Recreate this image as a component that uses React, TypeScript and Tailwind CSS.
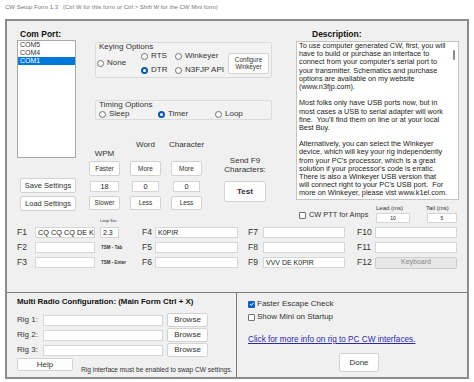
import React from "react";

const desc = [
  "To use computer generated CW, first, you will",
  "have to build or purchase an interface to",
  "connect from your computer's serial port to",
  "your transmitter. Schematics and purchase",
  "options are available on my website",
  "(www.n3fjp.com).",
  "",
  "Most folks only have USB ports now, but in",
  "most cases a USB to serial adapter will work",
  "fine.  You'll find them on line or at your local",
  "Best Buy.",
  "",
  "Alternatively, you can select the Winkeyer",
  "device, which will key your rig independently",
  "from your PC's processor, which is a great",
  "solution if your processor's code is erratic.",
  "There is also a Winkeyer USB version that",
  "will connect right to your PC's USB port.  For",
  "more on Winkeyer, please vist www.k1el.com.",
];

const Btn: React.FC<{ className?: string; children?: React.ReactNode }> = ({ className, children }) => (
  <div
    className={`flex shrink-0 items-center justify-center rounded-[2px] border border-[#d2d2d2] bg-[#fdfdfd] text-[#333] ${className ?? ""}`}
  >
    {children}
  </div>
);

// input box; text size passed in so classes don't clash
const Field: React.FC<{ className?: string; size?: string; children?: React.ReactNode }> = ({
  className,
  size = "text-[7.3px] leading-[9px]",
  children,
}) => (
  <div
    className={`shrink-0 whitespace-pre border border-[#d6d6d6] bg-white text-[#222] ${size} ${className ?? ""}`}
  >
    {children}
  </div>
);

const Radio: React.FC<{ checked?: boolean }> = ({ checked }) =>
  checked ? (
    <span className="flex h-[7px] w-[7px] shrink-0 items-center justify-center rounded-full bg-[#0b57a8]">
      <span className="h-[3px] w-[3px] rounded-full bg-white" />
    </span>
  ) : (
    <span className="h-[7px] w-[7px] shrink-0 rounded-full border border-[#707070] bg-white" />
  );

const RadioItem: React.FC<{ label: string; checked?: boolean; className?: string }> = ({
  label,
  checked,
  className,
}) => (
  <div className={`flex h-[8px] items-center gap-[3px] text-[8px] leading-[8px] text-[#333] ${className ?? ""}`}>
    <Radio checked={checked} />
    <span className="whitespace-nowrap">{label}</span>
  </div>
);

const Check: React.FC<{ checked?: boolean }> = ({ checked }) =>
  checked ? (
    <span className="flex h-[7px] w-[7px] shrink-0 items-center justify-center rounded-[1px] bg-[#0b62c4]">
      <svg viewBox="0 0 8 8" className="h-[6px] w-[6px]">
        <path d="M1.5 4.2 3.2 5.8 6.5 2.2" fill="none" stroke="white" strokeWidth="1.3" />
      </svg>
    </span>
  ) : (
    <span className="h-[7px] w-[7px] shrink-0 rounded-[1px] border border-[#707070] bg-white" />
  );

const FLabel: React.FC<{ w: string; children: React.ReactNode }> = ({ w, children }) => (
  <div className={`${w} shrink-0 text-[8.5px] leading-[11px] text-[#333]`}>{children}</div>
);

export default function App() {
  return (
    <div className="h-[382px] w-[474px] overflow-hidden bg-white font-['Liberation_Sans',Arial,sans-serif] text-[#333]">
      <div className="h-[19px] whitespace-pre pl-[5px] pt-[4px] text-[6px] leading-[6px] text-[#777]">
        {"CW Setup Form 1.3   (Ctrl W for this form or Ctrl > Shift W for the CW Mini form)"}
      </div>

      <div className="ml-[5px] flex h-[360px] w-[464px] flex-col border-2 border-[#8c8c8c] bg-[#f0f0f0]">
        {/* Upper section */}
        <div className="h-[272px] shrink-0 border-b border-[#7a7a7a]">
          <div className="flex h-[206px] pl-[10px]">
            {/* Com port column */}
            <div className="flex w-[59px] flex-col pt-[7px]">
              <div className="h-[12px] pl-[3px] text-[8.5px] font-bold leading-[12px] text-[#111]">Com Port:</div>
              <div className="h-[118px] border border-[#a9a9a9] bg-white">
                <div className="h-[8px] pl-[2px] text-[7px] leading-[8px]">COM5</div>
                <div className="h-[8px] pl-[2px] text-[7px] leading-[8px]">COM4</div>
                <div className="h-[8px] bg-[#0078d7] pl-[2px] text-[7px] leading-[8px] text-white">COM1</div>
              </div>
              <Btn className="ml-[3px] mt-[20px] h-[15px] w-[56px] text-[7.5px]">Save Settings</Btn>
              <Btn className="ml-[3px] mt-[3px] h-[15px] w-[56px] text-[7.5px]">Load Settings</Btn>
            </div>

            {/* Options column */}
            <div className="ml-[13px] flex w-[184px] flex-col">
              <div className="ml-[6px] mt-[21px] h-[36px] w-[177px] rounded-[2px] border border-[#dadada] bg-[#f2f2f2]">
                <div className="pl-[3px] text-[8px] leading-[7px]">Keying Options</div>
                <div className="mt-[2px] flex items-center pl-[1px]">
                  <RadioItem label="None" className="w-[44px]" />
                  <div className="flex w-[34px] flex-col gap-[6px]">
                    <RadioItem label="RTS" />
                    <RadioItem label="DTR" checked />
                  </div>
                  <div className="flex w-[53px] flex-col gap-[6px]">
                    <RadioItem label="Winkeyer" />
                    <RadioItem label="N3FJP API" />
                  </div>
                  <Btn className="h-[21px] w-[41px] flex-col text-[6.3px] leading-[7px]">
                    <span>Configure</span>
                    <span>Winkeyer</span>
                  </Btn>
                </div>
              </div>

              <div className="ml-[6px] mt-[22px] h-[20px] w-[177px] rounded-[2px] border border-[#dadada] bg-[#f2f2f2]">
                <div className="pl-[3px] text-[8px] leading-[7px]">Timing Options</div>
                <div className="mt-[2px] flex items-center pl-[3px]">
                  <RadioItem label="Sleep" className="w-[59px]" />
                  <RadioItem label="Timer" checked className="w-[57px]" />
                  <RadioItem label="Loop" />
                </div>
              </div>

              <div className="mt-[20px] flex">
                <div className="flex w-[31px] flex-col items-center">
                  <div className="mt-[9px] h-[10px] text-[8px] leading-[10px]">WPM</div>
                  <Btn className="mt-[2px] h-[15px] w-[31px] text-[6.5px]">Faster</Btn>
                  <Field className="mt-[5px] h-[11px] w-[29px] text-center">18</Field>
                  <Btn className="mt-[4px] h-[14px] w-[31px] text-[6.5px]">Slower</Btn>
                </div>
                <div className="ml-[10px] flex w-[31px] flex-col items-center">
                  <div className="h-[10px] text-[8px] leading-[10px]">Word</div>
                  <Btn className="mt-[11px] h-[15px] w-[31px] text-[6.5px]">More</Btn>
                  <Field className="mt-[5px] h-[11px] w-[27px] text-center">0</Field>
                  <Btn className="mt-[4px] h-[14px] w-[31px] text-[6.5px]">Less</Btn>
                </div>
                <div className="ml-[10px] flex w-[31px] flex-col items-center">
                  <div className="h-[10px] whitespace-nowrap text-[8px] leading-[10px]">Character</div>
                  <Btn className="mt-[11px] h-[15px] w-[31px] text-[6.5px]">More</Btn>
                  <Field className="mt-[5px] h-[11px] w-[27px] text-center">0</Field>
                  <Btn className="mt-[4px] h-[14px] w-[31px] text-[6.5px]">Less</Btn>
                </div>
                <div className="ml-[22px] flex w-[42px] flex-col items-center">
                  <div className="mt-[16px] whitespace-nowrap text-center text-[8px] leading-[9px]">
                    Send F9
                    <br />
                    Characters:
                  </div>
                  <Btn className="mt-[7px] h-[21px] w-[42px] text-[8px] font-bold text-[#111]">Test</Btn>
                </div>
              </div>

              <div className="ml-[11px] mt-[8px] whitespace-nowrap text-[4px] leading-[6px]">Loop Sec</div>
            </div>

            {/* Description column */}
            <div className="ml-[23px] flex w-[163px] flex-col pt-[7px]">
              <div className="h-[12px] pl-[16px] text-[8.5px] font-bold leading-[12px] text-[#111]">Description:</div>
              <div className="mt-[1px] flex h-[159px] border border-[#c4c4c4] bg-white">
                <div className="flex-1 pl-[2px] text-[7.3px] leading-[8.2px] text-[#222]">
                  {desc.map((l, i) => (
                    <div key={i} className="h-[8.2px] whitespace-pre">
                      {l || "\u00a0"}
                    </div>
                  ))}
                </div>
                <div className="flex w-[8px] justify-center">
                  <div className="mt-[8px] h-[10px] w-[2px] rounded-full bg-[#8a8a8a]" />
                </div>
              </div>
              <div className="mt-[5px] flex h-[18px]">
                <div className="mb-[3px] flex w-[80px] items-center gap-[3px] self-end pl-[3px] text-[7.4px] leading-[10px]">
                  <Check />
                  <span className="whitespace-nowrap">CW PTT for Amps</span>
                </div>
                <div className="flex w-[34px] flex-col">
                  <div className="h-[7px] whitespace-nowrap text-[6px] leading-[7px]">Lead (ms)</div>
                  <Field className="mt-px h-[10px] w-[34px] text-center" size="text-[5px] leading-[8px]">
                    10
                  </Field>
                </div>
                <div className="ml-[16px] flex w-[31px] flex-col">
                  <div className="h-[7px] whitespace-nowrap text-[6px] leading-[7px]">Tail (ms)</div>
                  <Field className="ml-px mt-px h-[10px] w-[30px] text-center" size="text-[5px] leading-[8px]">
                    5
                  </Field>
                </div>
              </div>
            </div>
          </div>

          {/* Function key rows */}
          <div className="flex flex-col gap-[4px] pl-[10px]">
            <div className="flex h-[11px] items-center">
              <FLabel w="w-[18px]">F1</FLabel>
              <Field className="h-[11px] w-[60px] pl-[2px]">CQ CQ CQ DE K</Field>
              <div className="w-[47px] pl-[5px]">
                <Field className="h-[11px] w-[19px] pl-[2px]" size="text-[7px] leading-[9px]">
                  2.3
                </Field>
              </div>
              <FLabel w="w-[13px]">F4</FLabel>
              <Field className="h-[11px] w-[83px] pl-[2px]" size="text-[7px] leading-[9px]">
                K0PIR
              </Field>
              <div className="w-[10px]" />
              <FLabel w="w-[15px]">F7</FLabel>
              <Field className="h-[11px] w-[82px]" />
              <div className="w-[12px]" />
              <FLabel w="w-[18px]">F10</FLabel>
              <Field className="h-[11px] w-[82px]" />
            </div>
            <div className="flex h-[11px] items-center">
              <FLabel w="w-[18px]">F2</FLabel>
              <Field className="h-[11px] w-[60px]" />
              <div className="w-[47px] whitespace-nowrap pl-[6px] text-[4.5px] font-bold leading-[6px]">TSM - Tab</div>
              <FLabel w="w-[13px]">F5</FLabel>
              <Field className="h-[11px] w-[83px]" />
              <div className="w-[10px]" />
              <FLabel w="w-[15px]">F8</FLabel>
              <Field className="h-[11px] w-[82px]" />
              <div className="w-[12px]" />
              <FLabel w="w-[18px]">F11</FLabel>
              <Field className="h-[11px] w-[82px]" />
            </div>
            <div className="flex h-[11px] items-center">
              <FLabel w="w-[18px]">F3</FLabel>
              <Field className="h-[11px] w-[60px]" />
              <div className="w-[47px] whitespace-nowrap pl-[6px] text-[4.5px] font-bold leading-[6px]">TSM - Enter</div>
              <FLabel w="w-[13px]">F6</FLabel>
              <Field className="h-[11px] w-[83px]" />
              <div className="w-[10px]" />
              <FLabel w="w-[15px]">F9</FLabel>
              <Field className="h-[11px] w-[82px] pl-[2px]" size="text-[7px] leading-[9px]">
                VVV DE K0PIR
              </Field>
              <div className="w-[12px]" />
              <FLabel w="w-[18px]">F12</FLabel>
              <div className="flex h-[12px] w-[82px] items-center justify-center rounded-[2px] border border-[#cdcdcd] bg-[#e6e6e6] text-[7px] text-[#8a8a8a]">
                Keyboard
              </div>
            </div>
          </div>
        </div>

        {/* Bottom section */}
        <div className="flex h-[84px]">
          <div className="w-[230px] shrink-0 border-r border-[#7a7a7a] pl-[10px] pt-[4px]">
            <div className="h-[10px] whitespace-nowrap text-[7.9px] font-bold leading-[10px] text-[#111]">
              Multi Radio Configuration: (Main Form Ctrl + X)
            </div>
            <div className="mt-[6px] flex flex-col gap-px">
              {["Rig 1:", "Rig 2:", "Rig 3:"].map((r) => (
                <div key={r} className="flex h-[14px] items-center">
                  <div className="w-[26px] text-[8px]">{r}</div>
                  <Field className="h-[11px] w-[120px]" />
                  <Btn className="ml-[4px] h-[14px] w-[41px] text-[8px]">Browse</Btn>
                </div>
              ))}
            </div>
            <div className="mt-px flex items-end">
              <Btn className="h-[13px] w-[56px] text-[8px]">Help</Btn>
              <div className="-mb-[2px] ml-[8px] whitespace-nowrap text-[6.6px] leading-[7px]">
                Rig interface must be enabled to swap CW settings.
              </div>
            </div>
          </div>

          <div className="flex-1 pl-[11px] pt-[6px]">
            <div className="flex h-[10px] items-center gap-[2px] text-[8px]">
              <Check checked />
              <span>Faster Escape Check</span>
            </div>
            <div className="mt-[3px] flex h-[10px] items-center gap-[2px] text-[8px]">
              <Check />
              <span>Show Mini on Startup</span>
            </div>
            <div className="mt-[13px] h-[10px] whitespace-nowrap text-[8.2px] leading-[10px] text-[#2b2ba8] underline">
              Click for more info on rig to PC CW interfaces.
            </div>
            <Btn className="ml-[91px] mt-[8px] h-[19px] w-[40px] text-[8px]">Done</Btn>
          </div>
        </div>
      </div>
    </div>
  );
}
